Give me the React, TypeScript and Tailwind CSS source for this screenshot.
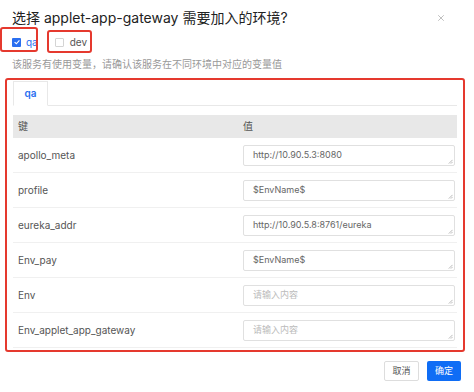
import { X } from 'lucide-react';

const rows = [
  { key: 'apollo_meta', value: 'http://10.90.5.3:8080' },
  { key: 'profile', value: '$EnvName$' },
  { key: 'eureka_addr', value: 'http://10.90.5.8:8761/eureka' },
  { key: 'Env_pay', value: '$EnvName$' },
  { key: 'Env', value: '' },
  { key: 'Env_applet_app_gateway', value: '' },
];

export default function App() {
  return (
    <div
      className="relative w-[474px] h-[392px] bg-white text-[#333] overflow-hidden"
      style={{ fontFamily: 'Inter, "Noto Sans CJK SC", sans-serif' }}
    >
      {/* Header */}
      <div className="flex items-center justify-between pl-3 pr-[28px] pt-[8px] h-[28px]">
        <h1 className="text-[14px] leading-[20px] text-[#222]">选择 applet-app-gateway 需要加入的环境?</h1>
        <X className="w-[10px] h-[10px] text-[#999]" strokeWidth={1.5} />
      </div>

      {/* Environments */}
      <div className="flex items-center gap-[17px] pl-3 h-[26px] mt-[1px]">
        <label className="flex items-center gap-[5px] text-[10px] text-[#2a6ff0]">
          <span className="w-[9px] h-[9px] rounded-[1px] bg-[#2a6ff0] flex items-center justify-center">
            <svg viewBox="0 0 10 10" className="w-[8px] h-[8px]">
              <path d="M2 5.2 L4.2 7.2 L8 3" fill="none" stroke="white" strokeWidth="1.4" />
            </svg>
          </span>
          qa
        </label>
        <label className="flex items-center gap-[6px] text-[10px] text-[#555]">
          <span className="w-[9px] h-[9px] rounded-[1px] border border-[#d4d4d4] bg-white" />
          dev
        </label>
      </div>

      <p className="pl-3 mt-[2px] text-[10px] leading-[14px] text-[#999]">
        该服务有使用变量，请确认该服务在不同环境中对应的变量值
      </p>

      {/* Variables panel */}
      <div className="mx-[5px] mt-[7px] h-[274px] w-[460px] border-2 border-[#e5392e] rounded-[3px] px-[6px] pt-[1px]">
        <div className="flex border-b border-[#e8e8e8] h-[25px]">
          <div className="w-[35px] h-[25px] -mb-px bg-white border border-b-white border-[#e8e8e8] flex items-center justify-center text-[10px] font-semibold text-[#2a6ff0]">
            qa
          </div>
        </div>

        <div className="mt-[9px] w-[444px] text-[10px]">
          <div className="grid grid-cols-[224px_1fr] h-[23px] items-center bg-[#e8e8e8] text-[#555]">
            <span className="pl-[5px]">键</span>
            <span className="pl-[6px]">值</span>
          </div>
          {rows.map((r) => (
            <div key={r.key} className="grid grid-cols-[224px_1fr] h-[35px] items-center border-b border-[#f0f0f0]">
              <span className="pl-[5px] text-[#555]">{r.key}</span>
              <div className="relative pl-[6px] pr-[2px]">
                <div className="h-[21px] border border-[#e0e0e0] rounded-[2px] flex items-center pl-[9px] text-[9px]">
                  {r.value ? (
                    <span className="text-[#666]">{r.value}</span>
                  ) : (
                    <span className="text-[#bbb]">请输入内容</span>
                  )}
                </div>
                <svg viewBox="0 0 6 6" className="absolute right-[4px] bottom-[2px] w-[5px] h-[5px]">
                  <path d="M1 5.5 L5.5 1 M3.5 5.5 L5.5 3.5" stroke="#999" strokeWidth="0.8" />
                </svg>
              </div>
            </div>
          ))}
        </div>
      </div>

      {/* Footer */}
      <div className="flex justify-end gap-[8px] pr-[13px] mt-[9px]">
        <button className="w-[35px] h-[20px] border border-[#ddd] rounded-[2px] text-[9px] text-[#555] bg-white">取消</button>
        <button className="w-[34px] h-[20px] rounded-[2px] text-[9px] text-white bg-[#0f6df5]">确定</button>
      </div>

      {/* Annotation boxes */}
      <div className="absolute left-0 top-[27px] w-[38px] h-[25px] border-2 border-[#e5392e] rounded-[3px]" />
      <div className="absolute left-[47px] top-[30px] w-[45px] h-[23px] border-2 border-[#e5392e] rounded-[3px]" />
    </div>
  );
}
